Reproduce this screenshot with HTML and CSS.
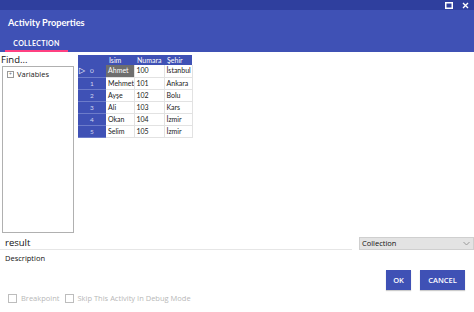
FILE: index.html
```html
<!DOCTYPE html>
<html lang="en">
<head>
    <meta charset="UTF-8">
    <meta name="viewport" content="width=device-width, initial-scale=1.0">
    <title>Activity Properties</title>
    <link rel="stylesheet" href="styles.css">
</head>
<body>
    <div class="window">
        <div class="titlebar">
            <svg class="win-icon" width="8" height="7" viewBox="0 0 8 7">
                <rect x="0.75" y="0.75" width="6.5" height="5.5" fill="none" stroke="#fff" stroke-width="1.5"/>
            </svg>
            <svg class="win-icon" width="7" height="7" viewBox="0 0 7 7">
                <path d="M1 1 L6 6 M6 1 L1 6" stroke="#fff" stroke-width="1.4"/>
            </svg>
        </div>
        <div class="header">
            <div class="header-title">Activity Properties</div>
            <div class="tab">COLLECTION</div>
        </div>

        <div class="main">
            <div class="left-panel">
                <div class="find">Find...</div>
                <div class="tree">
                    <div class="tree-item"><span class="expander">+</span>Variables</div>
                </div>
            </div>
            <table class="grid">
                <colgroup>
                    <col class="col-head">
                    <col class="col-isim">
                    <col class="col-num">
                    <col class="col-sehir">
                </colgroup>
                <thead>
                    <tr>
                        <th class="row-head"></th>
                        <th>Isim</th>
                        <th>Numara</th>
                        <th>Şehir</th>
                    </tr>
                </thead>
                <tbody>
                    <tr>
                        <td class="row-head"><span class="arrow">&#9655;</span>0</td>
                        <td class="selected">Ahmet</td>
                        <td>100</td>
                        <td>İstanbul</td>
                    </tr>
                    <tr>
                        <td class="row-head">1</td>
                        <td>Mehmet</td>
                        <td>101</td>
                        <td>Ankara</td>
                    </tr>
                    <tr>
                        <td class="row-head">2</td>
                        <td>Ayşe</td>
                        <td>102</td>
                        <td>Bolu</td>
                    </tr>
                    <tr>
                        <td class="row-head">3</td>
                        <td>Ali</td>
                        <td>103</td>
                        <td>Kars</td>
                    </tr>
                    <tr>
                        <td class="row-head">4</td>
                        <td>Okan</td>
                        <td>104</td>
                        <td>İzmir</td>
                    </tr>
                    <tr>
                        <td class="row-head">5</td>
                        <td>Selim</td>
                        <td>105</td>
                        <td>İzmir</td>
                    </tr>
                </tbody>
            </table>
        </div>

        <div class="result-row">
            <div class="result-input">result</div>
            <div class="select">
                <span>Collection</span>
                <svg width="7" height="5" viewBox="0 0 7 5">
                    <path d="M0.5 1 L3.5 4 L6.5 1" fill="none" stroke="#999" stroke-width="1"/>
                </svg>
            </div>
        </div>
        <div class="description">Description</div>

        <div class="actions">
            <button class="btn btn-ok">OK</button>
            <button class="btn btn-cancel">CANCEL</button>
        </div>

        <div class="options">
            <label class="check"><span class="box"></span>Breakpoint</label>
            <label class="check"><span class="box"></span>Skip This Activity In Debug Mode</label>
        </div>
    </div>
</body>
</html>
```

FILE: styles.css
```css
html, body {
    margin: 0;
    padding: 0;
    background: #fff;
}
body {
    font-family: "Open Sans", "Noto Sans", sans-serif;
    width: 474px;
    height: 312px;
    overflow: hidden;
}
.window {
    width: 474px;
    height: 312px;
    display: flex;
    flex-direction: column;
}
.window > * {
    flex-shrink: 0;
}
.titlebar {
    height: 10px;
    background: #2f3f9e;
    display: flex;
    justify-content: flex-end;
    align-items: center;
    gap: 9px;
    padding-right: 5px;
}
.win-icon {
    display: block;
}
.header {
    height: 42px;
    background: #3f51b5;
    color: #fff;
    display: flex;
    flex-direction: column;
}
.header-title {
    font-family: Lato, "Open Sans", sans-serif;
    font-size: 9.2px;
    font-weight: bold;
    line-height: 14px;
    padding: 6px 0 0 8px;
}
.tab {
    margin: auto 0 0 5px;
    width: 63px;
    height: 14px;
    box-sizing: border-box;
    border-bottom: 2px solid #ff4081;
    font-family: Lato, "Open Sans", sans-serif;
    font-size: 7px;
    font-weight: bold;
    letter-spacing: 0.3px;
    text-align: center;
    line-height: 10px;
}
.main {
    display: flex;
    align-items: flex-start;
    height: 181px;
}
.left-panel {
    width: 75px;
}
.find {
    font-size: 9.5px;
    line-height: 12px;
    padding: 2px 0 0 1px;
    color: #111;
}
.tree {
    margin-left: 2px;
    width: 72px;
    height: 167px;
    box-sizing: border-box;
    border: 1px solid #b0b0b0;
    padding: 2px 0 0 4px;
}
.tree-item {
    font-size: 7.5px;
    line-height: 10px;
    color: #222;
    display: flex;
    align-items: center;
}
.expander {
    display: inline-block;
    width: 5px;
    height: 5px;
    border: 1px solid #999;
    font-size: 5px;
    line-height: 5px;
    text-align: center;
    color: #666;
    margin-right: 3px;
}
.grid {
    margin: 3px 0 0 3px;
    border-collapse: collapse;
    table-layout: fixed;
    width: 114px;
    font-family: Lato, "Open Sans", sans-serif;
    font-size: 7px;
    color: #222;
}
.col-head {
    width: 28px;
}
.col-isim {
    width: 28px;
}
.col-num {
    width: 30px;
}
.col-sehir {
    width: 28px;
}
.grid th {
    background: #3f51b5;
    color: #fff;
    font-weight: normal;
    height: 10px;
    padding: 0 0 0 3px;
    text-align: left;
    line-height: 10px;
    white-space: nowrap;
    overflow: hidden;
}
.grid td {
    height: 12px;
    padding: 0 0 0 2px;
    border-bottom: 1px solid #e2e2e2;
    border-right: 1px solid #e2e2e2;
    line-height: 11px;
    box-sizing: border-box;
    white-space: nowrap;
    overflow: hidden;
}
.grid .row-head {
    padding: 0;
}
.grid td.row-head {
    background: #3f51b5;
    color: #cfd5f0;
    font-size: 6.5px;
    text-align: center;
    border-right: none;
    border-bottom: 1px solid #6d7cca;
    position: relative;
}
.arrow {
    position: absolute;
    left: 1px;
    top: 0;
    font-size: 8px;
    color: #fff;
}
.grid td.selected {
    background: #6e6e6e;
    color: #fff;
}
.result-row {
    display: flex;
    align-items: center;
    height: 14px;
    margin-top: 3px;
}
.result-input {
    width: 350px;
    margin-right: 7px;
    padding-left: 5px;
    border-bottom: 1px solid #e6e6e6;
    font-size: 9.5px;
    line-height: 13px;
    color: #111;
}
.select {
    width: 116px;
    height: 13px;
    box-sizing: border-box;
    background: #e3e3e3;
    border: 1px solid #cfcfcf;
    display: flex;
    align-items: center;
    justify-content: space-between;
    padding: 0 3px 0 2px;
    font-size: 7.5px;
    color: #111;
}
.description {
    font-size: 7.5px;
    line-height: 10px;
    padding: 3px 0 0 5px;
    color: #111;
}
.actions {
    display: flex;
    justify-content: flex-end;
    gap: 9px;
    padding-right: 9px;
    margin-top: 7px;
}
.btn {
    height: 20px;
    border: none;
    background: #3f51b5;
    color: #fff;
    font-family: "Open Sans", "Noto Sans", sans-serif;
    font-size: 7.5px;
    font-weight: 600;
    padding: 0;
    box-shadow: 0 1px 1px rgba(0, 0, 0, 0.2);
}
.btn-ok {
    width: 25px;
}
.btn-cancel {
    width: 45px;
}
.options {
    display: flex;
    gap: 5px;
    padding-left: 8px;
    margin-top: 3px;
}
.check {
    display: flex;
    align-items: center;
    font-size: 7.5px;
    color: #b8b8b8;
    line-height: 10px;
}
.box {
    width: 9px;
    height: 9px;
    box-sizing: border-box;
    border: 1px solid #bdbdbd;
    margin-right: 4px;
}
```
